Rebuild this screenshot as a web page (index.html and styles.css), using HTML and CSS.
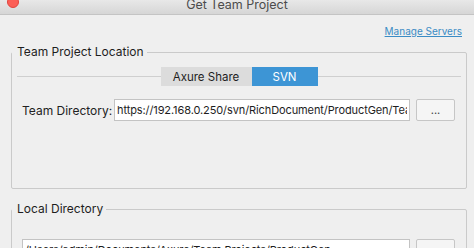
FILE: index.html
```html
<!DOCTYPE html>
<html lang="en">
  <head>
    <meta charset="UTF-8" />
    <meta name="viewport" content="width=device-width, initial-scale=1.0" />
    <title>Get Team Project</title>
    <link rel="stylesheet" href="styles.css">
  </head>
  <body>
    <div class="window">
      <div class="titlebar">
        <span class="light light-close"></span>
        <span class="title">Get Team Project</span>
      </div>

      <div class="content">
        <div class="links">
          <a href="#" class="link">Manage Servers</a>
        </div>

        <fieldset class="group">
          <legend>Team Project Location</legend>

          <div class="tabs">
            <span class="tab-line"></span>
            <div class="segmented">
              <button class="seg">Axure Share</button>
              <button class="seg active">SVN</button>
            </div>
            <span class="tab-line"></span>
          </div>

          <div class="field-row">
            <label class="field-label" for="team-dir">Team Directory:</label>
            <input class="path" id="team-dir" type="text" value="https://192.168.0.250/svn/RichDocument/ProductGen/TeamProject" />
            <button class="browse">...</button>
          </div>
        </fieldset>

        <fieldset class="group group-local">
          <legend>Local Directory</legend>

          <div class="field-row">
            <input class="path" type="text" value="/Users/admin/Documents/Axure/Team Projects/ProductGen" />
            <button class="browse">...</button>
          </div>
        </fieldset>
      </div>
    </div>
  </body>
</html>
```

FILE: styles.css
```css
* {
  margin: 0;
  padding: 0;
  box-sizing: border-box;
}

body {
  font-family: Inter, "Liberation Sans", Arial, sans-serif;
  background: #efefef;
  color: #222;
  width: 474px;
  height: 248px;
  overflow: hidden;
}

/* Window chrome */
.titlebar {
  height: 15px;
  display: flex;
  align-items: flex-end;
  justify-content: center;
  position: relative;
  background: linear-gradient(#e8e8e8, #d6d6d6);
  border-bottom: 1px solid #c4c4c4;
}

.title {
  font-size: 12.5px;
  line-height: 13px;
  color: #4c4c4c;
  padding-bottom: 3px;
}

.light {
  position: absolute;
  top: -4px;
  left: 7px;
  width: 12px;
  height: 12px;
  border-radius: 50%;
}

.light-close {
  background: #fc5f57;
  border: 1px solid #e0443e;
}

/* Dialog body */
.content {
  padding: 7px 7px 0 11px;
}

.links {
  display: flex;
  justify-content: flex-end;
  padding-right: 5px;
  height: 22px;
}

.link {
  font-size: 10px;
  line-height: 14px;
  padding-top: 2px;
  color: #3b8cc5;
  text-decoration: underline;
}

.group {
  border: 1px solid #cacaca;
  border-radius: 2px;
  padding: 0 0 67px;
}

.group legend {
  font-size: 12px;
  line-height: 16px;
  padding: 0 3px 0 5px;
  color: #1e1e1e;
}

.group-local {
  margin-top: 12px;
}

/* Tab selector */
.tabs {
  display: flex;
  align-items: center;
  padding: 7px 5px 0;
}

.tab-line {
  flex: 1;
  height: 1px;
  background: #cfcfcf;
}

.segmented {
  display: flex;
}

.seg {
  font-family: inherit;
  font-size: 11.5px;
  height: 19px;
  border: none;
  background: #dcdcdc;
  color: #1e1e1e;
  width: 91px;
}

.seg.active {
  background: #3d95d5;
  color: #fff;
  width: 66px;
}

/* Directory rows */
.field-row {
  display: flex;
  align-items: center;
  gap: 6px;
  padding: 13px 11px 0 10px;
}

.field-label {
  font-size: 12px;
  width: 86px;
  white-space: nowrap;
}

.path {
  flex: 1;
  min-width: 0;
  height: 22px;
  font-family: inherit;
  font-size: 11px;
  letter-spacing: -0.1px;
  color: #1e1e1e;
  padding: 0 2px;
  border: 1px solid #c3c3c3;
  background: #fff;
  outline: none;
}

.browse {
  width: 39px;
  height: 22px;
  font-family: inherit;
  font-size: 11px;
  color: #444;
  background: #f5f5f5;
  border: 1px solid #c6c6c6;
  border-radius: 2px;
}

.group-local .field-row {
  padding-top: 22px;
}
```
